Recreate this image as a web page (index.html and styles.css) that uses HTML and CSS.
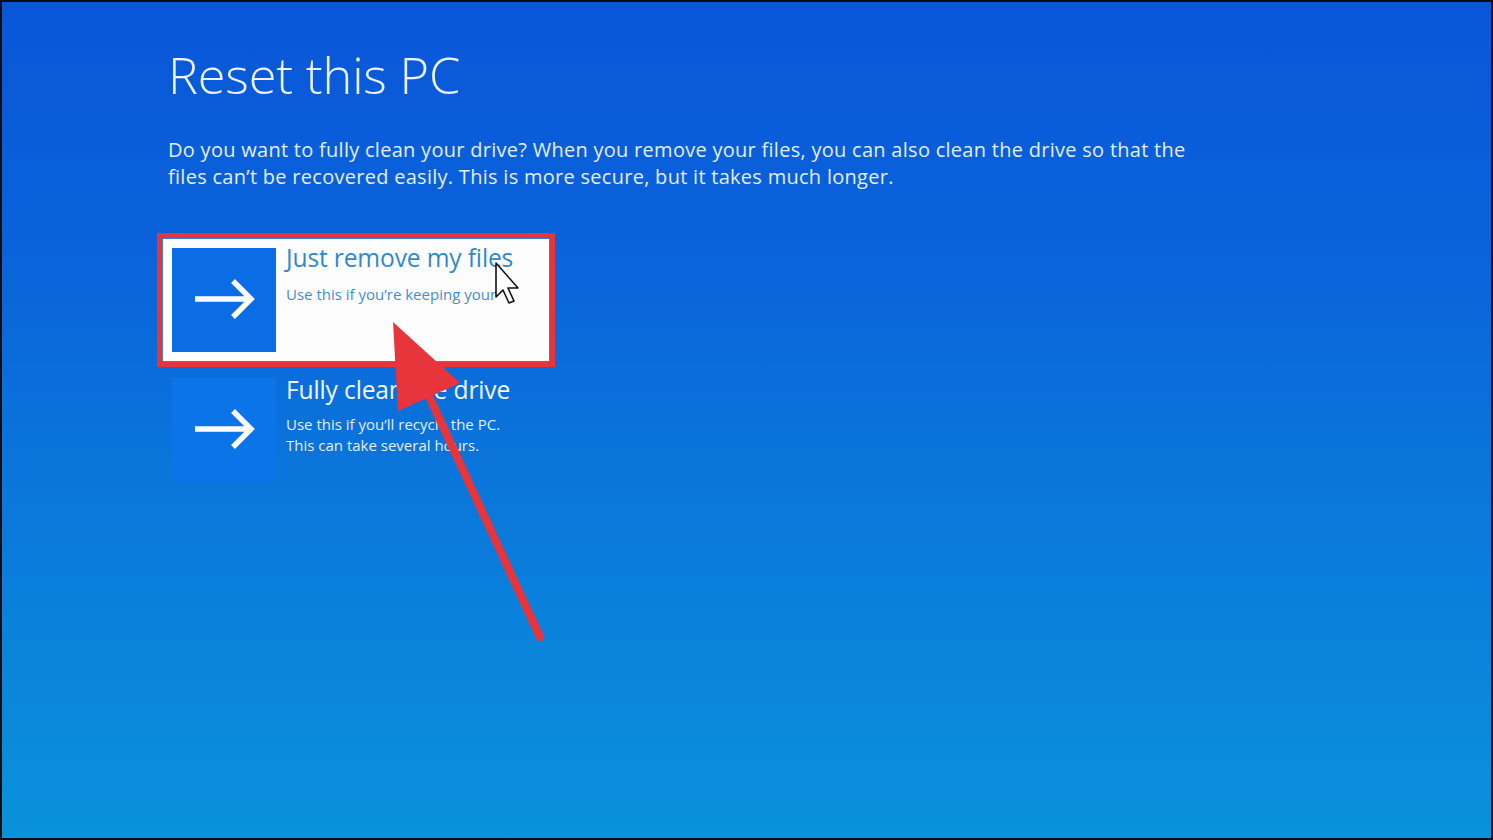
FILE: index.html
```html
<!DOCTYPE html>
<html lang="en">
<head>
<meta charset="utf-8">
<title>Reset this PC</title>
<link rel="stylesheet" href="styles.css">
</head>
<body>
<div class="screen">
  <main class="content">
    <h1 class="title">Reset this PC</h1>
    <p class="lead">Do you want to fully clean your drive? When you remove your files, you can also clean the drive so that the files can’t be recovered easily. This is more secure, but it takes much longer.</p>
    <div class="options">
      <div class="option selected">
        <div class="tile">
          <svg viewBox="0 0 104 104" width="104" height="104"><path d="M23 51 H78 M61 33 L79 51 L61 69" fill="none" stroke="#fff" stroke-width="5.5"/></svg>
        </div>
        <div class="text">
          <div class="opt-title">Just remove my files</div>
          <div class="opt-desc">Use this if you’re keeping your</div>
        </div>
      </div>
      <div class="option">
        <div class="tile">
          <svg viewBox="0 0 104 104" width="104" height="104"><path d="M23 51 H78 M61 33 L79 51 L61 69" fill="none" stroke="#fff" stroke-width="5.5"/></svg>
        </div>
        <div class="text">
          <div class="opt-title">Fully clean the drive</div>
          <div class="opt-desc">Use this if you’ll recycle the PC.<br>This can take several hours.</div>
        </div>
      </div>
    </div>
  </main>
  <svg class="annotation" viewBox="0 0 1489 836" width="1489" height="836">
    <path d="M538 635 L426 392" stroke="#e8353b" stroke-width="8" stroke-linecap="round"/>
    <polygon points="391,320 396,409 458,381" fill="#e8353b"/>
    <path d="M494 261 L494 295 L501 288 L507 301 L512 299 L506 286 L516 286 Z" fill="#fff" stroke="#111" stroke-width="1.6" stroke-linejoin="round"/>
  </svg>
</div>
</body>
</html>
```

FILE: styles.css
```css
* { box-sizing: border-box; }
html, body { margin: 0; padding: 0; }
body { width: 1493px; height: 840px; overflow: hidden; font-family: "Open Sans", "Noto Sans", sans-serif; }

.screen {
  position: relative;
  width: 1493px;
  height: 840px;
  border: 2px solid #0d0d12;
  background: linear-gradient(180deg, #0956d9 0%, #0a63da 30%, #0a78db 60%, #0a92db 100%);
  overflow: hidden;
}

.content {
  padding: 36px 0 0 166px;
  color: #eef5ff;
}

.title {
  margin: 0;
  font-weight: 300;
  font-size: 50.5px;
  line-height: 74px;
  letter-spacing: -0.2px;
  color: #eaf3ff;
}

.lead {
  margin: 24px 0 0 0;
  width: 1050px;
  font-size: 20px;
  line-height: 27px;
  font-weight: 400;
  letter-spacing: 0.28px;
  color: #e2eefc;
}

.options {
  margin-top: 48px;
  margin-left: -6px;
  display: flex;
  flex-direction: column;
  gap: 6px;
}

.option {
  width: 388px;
  display: flex;
  gap: 10px;
  padding: 9px 9px;
  border: 1px solid transparent;
}

.option.selected {
  background: #fdfdfe;
  border-color: #3b7fd6;
  outline: 5px solid #e5343a;
  outline-offset: 0;
}

.tile {
  width: 104px;
  height: 104px;
  flex: none;
  background: #0b74e8;
}
.option.selected .tile { background: #0a6de6; }
.tile svg { display: block; }

.text { display: flex; flex-direction: column; }

.opt-title {
  font-size: 24.6px;
  line-height: 28px;
  margin-top: -4px;
  letter-spacing: -0.15px;
  color: #f0f6ff;
}
.option + .option .opt-title { margin-top: -2px; }
.opt-desc {
  margin-top: 12px;
  font-size: 15px;
  line-height: 21px;
  color: #e4eefb;
}
.option + .option .opt-desc { margin-top: 10px; }
.option.selected .opt-title { color: #3388cc; }
.option.selected .opt-desc { color: #3d8fd2; }

.annotation {
  position: absolute;
  left: 0;
  top: 0;
  pointer-events: none;
}
```
